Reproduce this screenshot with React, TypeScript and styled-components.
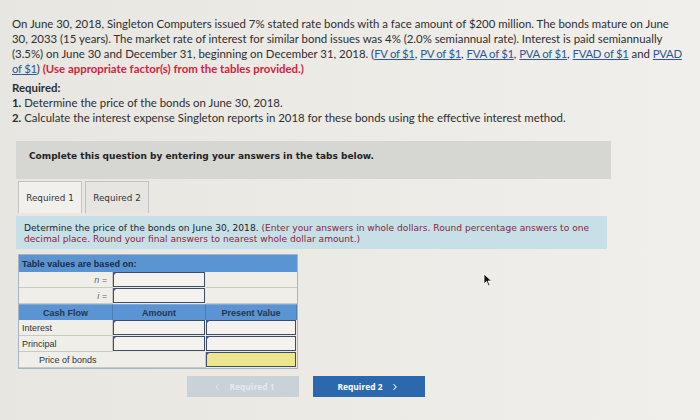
import React from "react";
import styled, { createGlobalStyle } from "styled-components";
import { ChevronLeft, ChevronRight } from "lucide-react";

const GlobalStyle = createGlobalStyle`
  html, body {
    margin: 0;
    padding: 0;
    width: 700px;
    height: 420px;
    overflow: hidden;
  }
  body {
    background: linear-gradient(90deg, #e8e6e1 0%, #edebe6 55%, #f1efeb 100%);
    font-family: Lato, "Open Sans", sans-serif;
    color: #2e2e33;
  }
`;

const Page = styled.div`
  position: relative;
  width: 700px;
  height: 420px;
  padding: 16px 12px 0 12px;
  box-sizing: border-box;
`;

const Para = styled.p`
  margin: 0;
  font-size: 11.4px;
  line-height: 15px;
  width: 676px;
  white-space: nowrap;
`;

const Link = styled.span`
  color: #2c5898;
  text-decoration: underline;
  letter-spacing: -0.3px;
`;

const Red = styled.span`
  color: #d2233f;
  font-weight: 700;
`;

const Required = styled.div`
  margin-top: 4px;
  font-size: 11.4px;
  line-height: 15px;
  b {
    font-weight: 700;
  }
`;

const Section = styled.div`
  margin: 16px 0 0 4px;
  width: 595px;
  font-family: "DejaVu Sans", Verdana, sans-serif;
`;

const Banner = styled.div`
  background: #d6d6d3;
  height: 38px;
  box-sizing: border-box;
  padding: 10px 0 0 13px;
  font-size: 9px;
  font-weight: 700;
  color: #222;
`;

const Tabs = styled.div`
  display: flex;
  gap: 3px;
  margin: 2px 0 0 2px;
`;

const Tab = styled.div<{ $active?: boolean }>`
  width: 64px;
  height: 32px;
  box-sizing: border-box;
  display: flex;
  align-items: center;
  justify-content: center;
  font-size: 8.8px;
  color: #333;
  background: ${(p) => (p.$active ? "#f1f0ec" : "#e6e5e1")};
  border: 1px solid #c2c2bf;
  border-bottom: none;
`;

const Instruction = styled.div`
  background: #c7e0e8;
  margin-top: 3px;
  width: 591px;
  box-sizing: border-box;
  padding: 7px 8px 5px 8px;
  font-size: 9.1px;
  line-height: 10.5px;
  color: #222;
  white-space: nowrap;
`;

const Maroon = styled.span`
  color: #8c2436;
`;

const TableGrid = styled.div`
  margin: 5px 0 0 2px;
  display: grid;
  grid-template-columns: 94px 93px 91px;
  grid-template-rows: 17px repeat(6, 16px);
  font-family: "Liberation Sans", Arial, sans-serif;
  font-size: 9px;
  background: #ebe9e3;
  border: 1px solid #a9b4c2;
  width: 278px;
`;

const TitleBar = styled.div`
  grid-column: 1 / 4;
  background: #5a94d2;
  color: #1c2a44;
  font-weight: 700;
  display: flex;
  align-items: center;
  padding-left: 3px;
`;

const HeadCell = styled.div`
  background: #5a94d2;
  color: #27344c;
  font-weight: 700;
  display: flex;
  align-items: center;
  justify-content: center;
  border-top: 1px solid #7ea9d8;
  border-right: 1px solid #4b7fb8;
  &:last-child {
    border-right: none;
  }
`;

const LabelCell = styled.div<{ $align?: string; $span?: number; $indent?: number }>`
  grid-column: ${(p) => (p.$span ? `span ${p.$span}` : "auto")};
  display: flex;
  align-items: center;
  justify-content: ${(p) => p.$align || "flex-start"};
  padding: 0 ${(p) => (p.$align === "flex-end" ? "5px" : "0")} 0
    ${(p) => (p.$indent ? `${p.$indent}px` : "3px")};
  color: #333;
  background: #efeee9;
  border-bottom: 1px solid #c9c9c4;
  border-right: 1px solid #c9c9c4;
`;

const Italic = styled.span`
  font-style: italic;
  color: #666;
`;

const EmptyCell = styled.div`
  background: #efeee9;
  border-bottom: 1px solid #c9c9c4;
`;

const InputCell = styled.div<{ $yellow?: boolean }>`
  position: relative;
  background: ${(p) => (p.$yellow ? "#ece68e" : "#f3f2ee")};
  border: 1px solid #3e4b69;
  margin: 0 1px 1px 0;
  &::before {
    content: "";
    position: absolute;
    left: -1px;
    top: -1px;
    border-top: 4px solid #3d5a8c;
    border-right: 4px solid transparent;
  }
`;

const Buttons = styled.div`
  display: flex;
  gap: 14px;
  margin: 7px 0 0 171px;
`;

const NavButton = styled.div<{ $disabled?: boolean }>`
  width: 112px;
  height: 21px;
  display: flex;
  align-items: center;
  justify-content: center;
  gap: 8px;
  font-family: "Open Sans", "DejaVu Sans", sans-serif;
  font-size: 8.4px;
  font-weight: 700;
  background: ${(p) => (p.$disabled ? "#c8d2d7" : "#2b69ae")};
  color: ${(p) => (p.$disabled ? "#e4eaed" : "#ffffff")};
`;

const Cursor = styled.svg`
  position: absolute;
  left: 483px;
  top: 273px;
`;

export default function App() {
  return (
    <>
      <GlobalStyle />
      <Page>
        <Para>
          On June 30, 2018, Singleton Computers issued 7% stated rate bonds with a face amount of $200 million. The
          bonds mature on June
          <br />
          30, 2033 (15 years). The market rate of interest for similar bond issues was 4% (2.0% semiannual rate).
          Interest is paid semiannually
          <br />
          (3.5%) on June 30 and December 31, beginning on December 31, 2018. (<Link>FV of $1</Link>,{" "}
          <Link>PV of $1</Link>, <Link>FVA of $1</Link>, <Link>PVA of $1</Link>, <Link>FVAD of $1</Link> and{" "}
          <Link>PVAD</Link>
          <br />
          <Link>of $1</Link>) <Red>(Use appropriate factor(s) from the tables provided.)</Red>
        </Para>
        <Required>
          <b>Required:</b>
          <div>
            <b>1.</b> Determine the price of the bonds on June 30, 2018.
          </div>
          <div>
            <b>2.</b> Calculate the interest expense Singleton reports in 2018 for these bonds using the effective
            interest method.
          </div>
        </Required>
        <Section>
          <Banner>Complete this question by entering your answers in the tabs below.</Banner>
          <Tabs>
            <Tab $active>Required 1</Tab>
            <Tab>Required 2</Tab>
          </Tabs>
          <Instruction>
            Determine the price of the bonds on June 30, 2018.{" "}
            <Maroon>
              (Enter your answers in whole dollars. Round percentage answers to one
              <br />
              decimal place. Round your final answers to nearest whole dollar amount.)
            </Maroon>
          </Instruction>
          <TableGrid>
            <TitleBar>Table values are based on:</TitleBar>
            <LabelCell $align="flex-end">
              <Italic>n =</Italic>
            </LabelCell>
            <InputCell />
            <EmptyCell />
            <LabelCell $align="flex-end">
              <Italic>i =</Italic>
            </LabelCell>
            <InputCell />
            <EmptyCell />
            <HeadCell>Cash Flow</HeadCell>
            <HeadCell>Amount</HeadCell>
            <HeadCell>Present Value</HeadCell>
            <LabelCell>Interest</LabelCell>
            <InputCell />
            <InputCell />
            <LabelCell>Principal</LabelCell>
            <InputCell />
            <InputCell />
            <LabelCell $span={2} $indent={20}>
              Price of bonds
            </LabelCell>
            <InputCell $yellow />
          </TableGrid>
          <Buttons>
            <NavButton $disabled>
              <ChevronLeft size={10} strokeWidth={2} />
              Required 1
            </NavButton>
            <NavButton>
              Required 2
              <ChevronRight size={10} strokeWidth={2.5} />
            </NavButton>
          </Buttons>
        </Section>
        <Cursor width="10" height="14" viewBox="0 0 10 14">
          <path d="M1 1 L1 11 L3.5 8.5 L5.5 13 L7 12.3 L5 8 L8.5 8 Z" fill="#111" stroke="#fff" strokeWidth="0.8" />
        </Cursor>
      </Page>
    </>
  );
}
